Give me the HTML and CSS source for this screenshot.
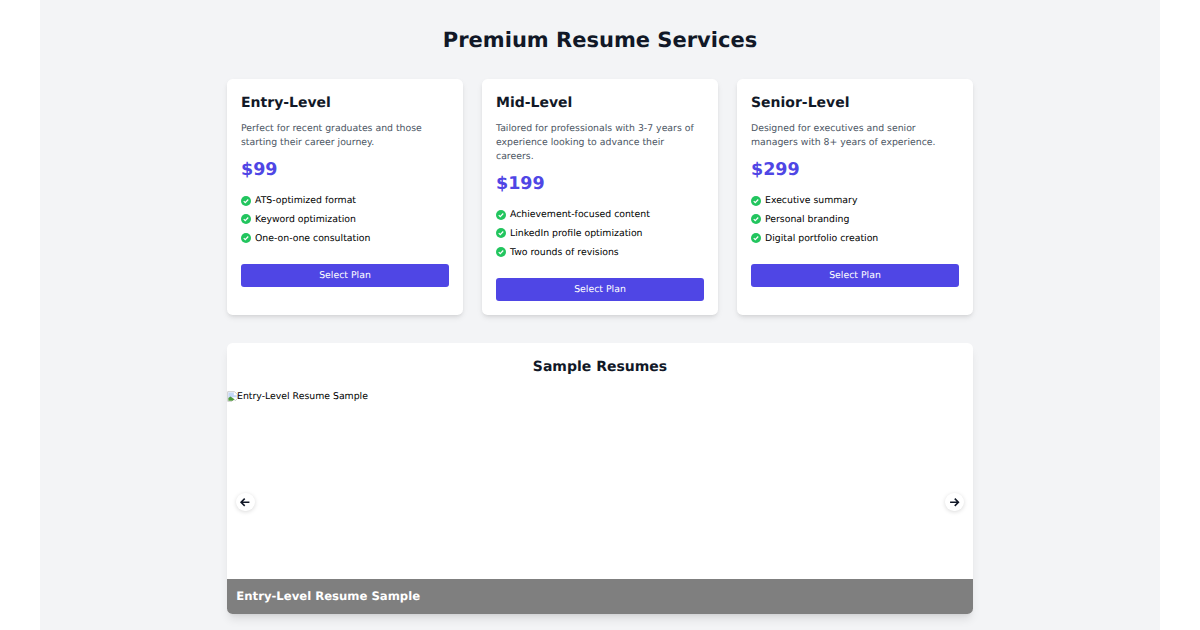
FILE: index.html
```html
<!DOCTYPE html>
<html lang="en">
<head>
<meta charset="utf-8">
<title>Premium Resume Services</title>
<link rel="stylesheet" href="styles.css">
</head>
<body>
<main class="page">
  <h1 class="title">Premium Resume Services</h1>
  <section class="plans">
    <article class="card">
      <h2 class="card-name">Entry-Level</h2>
      <p class="card-desc">Perfect for recent graduates and those starting their career journey.</p>
      <div class="price">$99</div>
      <ul class="features">
        <li class="feature"><svg class="check" viewBox="0 0 20 20"><circle cx="10" cy="10" r="10" fill="#22c55e"/><path d="M5.5 10.3l3 3 6-6.3" fill="none" stroke="#fff" stroke-width="2.4"/></svg>ATS-optimized format</li>
        <li class="feature"><svg class="check" viewBox="0 0 20 20"><circle cx="10" cy="10" r="10" fill="#22c55e"/><path d="M5.5 10.3l3 3 6-6.3" fill="none" stroke="#fff" stroke-width="2.4"/></svg>Keyword optimization</li>
        <li class="feature"><svg class="check" viewBox="0 0 20 20"><circle cx="10" cy="10" r="10" fill="#22c55e"/><path d="M5.5 10.3l3 3 6-6.3" fill="none" stroke="#fff" stroke-width="2.4"/></svg>One-on-one consultation</li>
      </ul>
      <button class="select">Select Plan</button>
    </article>
    <article class="card">
      <h2 class="card-name">Mid-Level</h2>
      <p class="card-desc">Tailored for professionals with 3-7 years of experience looking to advance their careers.</p>
      <div class="price">$199</div>
      <ul class="features">
        <li class="feature"><svg class="check" viewBox="0 0 20 20"><circle cx="10" cy="10" r="10" fill="#22c55e"/><path d="M5.5 10.3l3 3 6-6.3" fill="none" stroke="#fff" stroke-width="2.4"/></svg>Achievement-focused content</li>
        <li class="feature"><svg class="check" viewBox="0 0 20 20"><circle cx="10" cy="10" r="10" fill="#22c55e"/><path d="M5.5 10.3l3 3 6-6.3" fill="none" stroke="#fff" stroke-width="2.4"/></svg>LinkedIn profile optimization</li>
        <li class="feature"><svg class="check" viewBox="0 0 20 20"><circle cx="10" cy="10" r="10" fill="#22c55e"/><path d="M5.5 10.3l3 3 6-6.3" fill="none" stroke="#fff" stroke-width="2.4"/></svg>Two rounds of revisions</li>
      </ul>
      <button class="select">Select Plan</button>
    </article>
    <article class="card">
      <h2 class="card-name">Senior-Level</h2>
      <p class="card-desc">Designed for executives and senior managers with 8+ years of experience.</p>
      <div class="price">$299</div>
      <ul class="features">
        <li class="feature"><svg class="check" viewBox="0 0 20 20"><circle cx="10" cy="10" r="10" fill="#22c55e"/><path d="M5.5 10.3l3 3 6-6.3" fill="none" stroke="#fff" stroke-width="2.4"/></svg>Executive summary</li>
        <li class="feature"><svg class="check" viewBox="0 0 20 20"><circle cx="10" cy="10" r="10" fill="#22c55e"/><path d="M5.5 10.3l3 3 6-6.3" fill="none" stroke="#fff" stroke-width="2.4"/></svg>Personal branding</li>
        <li class="feature"><svg class="check" viewBox="0 0 20 20"><circle cx="10" cy="10" r="10" fill="#22c55e"/><path d="M5.5 10.3l3 3 6-6.3" fill="none" stroke="#fff" stroke-width="2.4"/></svg>Digital portfolio creation</li>
      </ul>
      <button class="select">Select Plan</button>
    </article>
  </section>
  <section class="samples">
    <h2 class="samples-title">Sample Resumes</h2>
    <div class="carousel">
      <div class="broken">
        <svg class="broken-icon" viewBox="0 0 16 16"><path d="M1 1h10l4 4v6l-3 3-2-2-3 3H1z" fill="#fff" stroke="#b5b5b5" stroke-width="1"/><path d="M2 2h8v4h4v3H9l-7 3z" fill="#c4d7f7"/><path d="M2 14V10l3-2 3 2 3 2-3 2z" fill="#4f9a3a"/></svg>
        <span>Entry-Level Resume Sample</span>
      </div>
      <button class="nav nav-prev" aria-label="Previous"><svg class="arrow" viewBox="0 0 24 24"><path d="M20 12H5M11 5l-7 7 7 7" fill="none" stroke="#111827" stroke-width="3"/></svg></button>
      <button class="nav nav-next" aria-label="Next"><svg class="arrow" viewBox="0 0 24 24"><path d="M4 12h15M13 5l7 7-7 7" fill="none" stroke="#111827" stroke-width="3"/></svg></button>
      <div class="caption">Entry-Level Resume Sample</div>
    </div>
  </section>
</main>
</body>
</html>
```
FILE: styles.css
```css
* { box-sizing: border-box; margin: 0; padding: 0; }
html, body { height: 100%; background: #fff; }
body {
  font-family: "DejaVu Sans", sans-serif;
  text-rendering: geometricPrecision;
  overflow: hidden;
}
.page {
  width: 1120px;
  height: 630px;
  margin: 0 auto;
  padding: 28px 187px 0;
  background: #f3f4f6;
}
.title {
  font-size: 21px;
  line-height: 24px;
  font-weight: 700;
  color: #111827;
  text-align: center;
  margin-bottom: 27px;
}
.plans {
  display: grid;
  grid-template-columns: repeat(3, 1fr);
  gap: 19px;
  align-items: stretch;
}
.card {
  background: #fff;
  border-radius: 5.6px;
  padding: 14px 14px 28px;
  height: 236px;
  box-shadow: 0 3px 6px -1px rgba(0,0,0,.1), 0 2px 4px -2px rgba(0,0,0,.1);
}
.card-name {
  font-size: 14px;
  line-height: 20px;
  font-weight: 700;
  color: #111827;
  margin-bottom: 9px;
}
.card-desc {
  font-size: 9.33px;
  line-height: 14px;
  color: #4b5563;
  margin-bottom: 9px;
}
.price {
  font-size: 17.5px;
  line-height: 22px;
  font-weight: 700;
  color: #4f46e5;
  margin-bottom: 13px;
}
.features { list-style: none; margin-bottom: 18px; }
.feature {
  display: flex;
  align-items: center;
  gap: 4px;
  font-size: 9.33px;
  line-height: 14px;
  color: #000;
  margin-bottom: 4.8px;
}
.check { width: 10px; height: 10px; flex: none; margin-top: -1px; }
.select {
  display: block;
  width: 100%;
  height: 23px;
  border: 0;
  border-radius: 3px;
  background: #4f46e5;
  color: #fff;
  font: 9.33px "DejaVu Sans", sans-serif;
  text-rendering: geometricPrecision;
}
.samples {
  margin-top: 28px;
  background: #fff;
  border-radius: 5.6px;
  box-shadow: 0 7px 10px -2px rgba(0,0,0,.1), 0 3px 4px -3px rgba(0,0,0,.1);
  overflow: hidden;
  height: 271px;
  display: flex;
  flex-direction: column;
}
.samples-title {
  font-size: 14px;
  line-height: 20px;
  font-weight: 700;
  color: #111827;
  text-align: center;
  padding-top: 14px;
  margin-bottom: 12px;
}
.carousel { position: relative; flex: 1; }
.broken {
  display: flex;
  align-items: center;
  font-size: 9.33px;
  line-height: 11px;
  padding-top: 2px;
  color: #000;
}
.broken-icon { width: 11px; height: 11px; flex: none; margin-right: -1px; margin-top: -1px; }
.nav {
  position: absolute;
  top: 103.5px;
  width: 18.67px;
  height: 18.67px;
  border: 0;
  border-radius: 50%;
  background: #fff;
  display: flex;
  align-items: center;
  justify-content: center;
  box-shadow: 0 1px 4px rgba(0,0,0,.15);
}
.nav-prev { left: 9.33px; }
.nav-next { right: 9.33px; }
.arrow { width: 12.5px; height: 12.5px; flex: none; }
.caption {
  position: absolute;
  left: 0;
  right: 0;
  bottom: 0;
  height: 35px;
  padding: 0 9.33px 1px;
  display: flex;
  align-items: center;
  background: rgba(0,0,0,.5);
  color: #fff;
  font-size: 11.67px;
  font-weight: 700;
}
```
